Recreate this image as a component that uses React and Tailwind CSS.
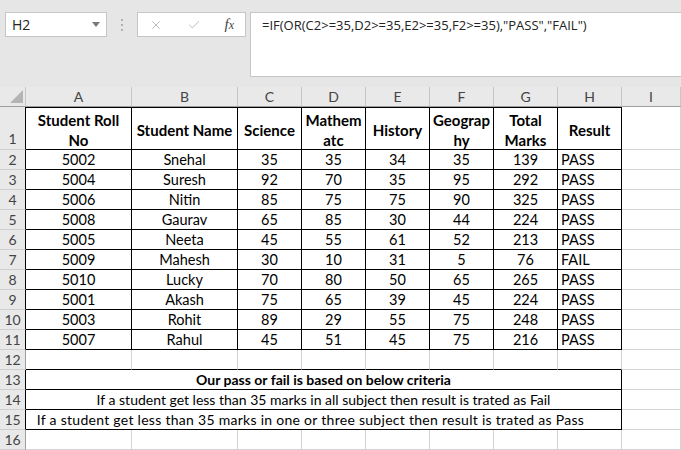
import { X, Check } from "lucide-react";

const students = [
  ["5002", "Snehal", 35, 35, 34, 35, 139, "PASS"],
  ["5004", "Suresh", 92, 70, 35, 95, 292, "PASS"],
  ["5006", "Nitin", 85, 75, 75, 90, 325, "PASS"],
  ["5008", "Gaurav", 65, 85, 30, 44, 224, "PASS"],
  ["5005", "Neeta", 45, 55, 61, 52, 213, "PASS"],
  ["5009", "Mahesh", 30, 10, 31, 5, 76, "FAIL"],
  ["5010", "Lucky", 70, 80, 50, 65, 265, "PASS"],
  ["5001", "Akash", 75, 65, 39, 45, 224, "PASS"],
  ["5003", "Rohit", 89, 29, 55, 75, 248, "PASS"],
  ["5007", "Rahul", 45, 51, 45, 75, 216, "PASS"],
];

const letters = ["A", "B", "C", "D", "E", "F", "G", "H", "I"];

const RowHead = ({ n, tall, dark }) => (
  <div
    className={`flex justify-center bg-[#e9e9e9] border-b border-b-[#cfcfcf] border-r text-[14px] text-[#444] ${
      tall ? "h-[43px] items-end leading-[20px]" : "h-[20px] items-center"
    } ${dark ? "border-r-black" : "border-r-[#9e9e9e]"}`}
  >
    {n}
  </div>
);

const Blank = ({ bottom }) => (
  <div
    className={`h-[20px] border-r border-b border-r-[#d4d4d4] ${
      bottom ? "border-b-black" : "border-b-[#d4d4d4]"
    }`}
  />
);

const Cell = ({ children, left }) => (
  <div
    className={`flex h-[20px] items-center border-r border-b border-black text-[14.5px] text-black ${
      left ? "justify-start pl-[3px]" : "justify-center"
    }`}
  >
    {children}
  </div>
);

const HeadCell = ({ children }) => (
  <div className="flex h-[43px] items-center justify-center border-t border-r border-b border-black pt-[2px] text-center text-[15px] font-bold leading-[20px] text-black">
    <span>{children}</span>
  </div>
);

const Merged = ({ children, bold, className = "" }) => (
  <div
    className={`col-span-8 flex h-[20px] items-center justify-center whitespace-nowrap border-r border-b border-black text-[14px] text-black ${
      bold ? "font-bold" : ""
    } ${className}`}
  >
    {children}
  </div>
);

const FormulaBar = () => (
  <div className="flex h-[77px] items-start pt-[12px] font-['Open_Sans',sans-serif]">
    {/* name box */}
    <div className="ml-[5px] flex h-[25px] w-[102px] items-center justify-between border border-[#c6c6c6] bg-white pl-[6px] pr-[6px] text-[14px] text-[#222]">
      <span>H2</span>
      <svg width="8" height="5" viewBox="0 0 8 5">
        <polygon points="0,0 8,0 4,5" fill="#7a7a7a" />
      </svg>
    </div>
    {/* grip dots */}
    <div className="flex w-[30px] flex-col items-center gap-[3px] pt-[7px]">
      <span className="h-[2px] w-[2px] bg-[#b0b0b0]" />
      <span className="h-[2px] w-[2px] bg-[#b0b0b0]" />
      <span className="h-[2px] w-[2px] bg-[#b0b0b0]" />
    </div>
    {/* cancel / enter / fx */}
    <div className="flex h-[25px] w-[109px] items-center justify-between border border-[#c6c6c6] bg-white pl-[11px] pr-[11px]">
      <X size={14} strokeWidth={1.5} color="#b4b4b4" />
      <Check size={14} strokeWidth={1.5} color="#b4b4b4" />
      <span className="font-['Liberation_Serif',serif] text-[15px] italic leading-none text-[#444]">
        f<span className="text-[12px]">x</span>
      </span>
    </div>
    {/* formula */}
    <div className="ml-[4px] h-[65px] flex-1 border border-r-0 border-[#c6c6c6] bg-white pl-[11px] pt-[2px] text-[13px] leading-[20px] text-[#222]">
      =IF(OR(C2&gt;=35,D2&gt;=35,E2&gt;=35,F2&gt;=35),"PASS","FAIL")
    </div>
  </div>
);

export default function App() {
  return (
    <div className="h-[450px] w-[681px] overflow-hidden bg-[#e6e6e6] font-['Lato',sans-serif]">
      <FormulaBar />
      <div className="h-[10px]" />
      <div className="grid grid-cols-[26px_106px_106px_64px_64px_64px_64px_64px_64px_59px] bg-white">
        {/* column headings */}
        <div className="relative h-[20px] border-r border-b border-r-[#c6c6c6] border-b-[#9e9e9e] bg-[#e9e9e9]">
          <svg className="absolute left-[10px] top-[3px]" width="13" height="13" viewBox="0 0 13 13">
            <polygon points="13,0 13,13 0,13" fill="#b4b4b4" />
          </svg>
        </div>
        {letters.map((l) => (
          <div
            key={l}
            className="flex h-[20px] items-center justify-center border-r border-b border-r-[#c6c6c6] border-b-[#9e9e9e] bg-[#e9e9e9] text-[14px] text-[#444]"
          >
            {l}
          </div>
        ))}

        {/* row 1 */}
        <RowHead n={1} tall dark />
        <HeadCell>
          Student Roll
          <br />
          No
        </HeadCell>
        <HeadCell>Student Name</HeadCell>
        <HeadCell>Science</HeadCell>
        <HeadCell>
          Mathem
          <br />
          atc
        </HeadCell>
        <HeadCell>History</HeadCell>
        <HeadCell>
          Geograp
          <br />
          hy
        </HeadCell>
        <HeadCell>
          Total
          <br />
          Marks
        </HeadCell>
        <HeadCell>Result</HeadCell>
        <div className="h-[43px] border-r border-b border-[#d4d4d4]" />

        {/* rows 2-11 */}
        {students.map((s, i) => (
          <div key={s[0]} className="contents">
            <RowHead n={i + 2} dark />
            {s.slice(0, 7).map((v, j) => (
              <Cell key={j}>{v}</Cell>
            ))}
            <Cell left>{s[7]}</Cell>
            <Blank />
          </div>
        ))}

        {/* row 12 */}
        <RowHead n={12} />
        {[0, 1, 2, 3, 4, 5, 6, 7].map((k) => (
          <Blank key={k} bottom />
        ))}
        <Blank />

        {/* criteria */}
        <RowHead n={13} dark />
        <Merged bold>Our pass or fail is based on below criteria</Merged>
        <Blank />
        <RowHead n={14} dark />
        <Merged>If a student get less than 35 marks in all subject then result is trated as Fail</Merged>
        <Blank />
        <RowHead n={15} dark />
        <Merged className="pr-[26px] tracking-[0.28px]">
          If a student get less than 35 marks in one or three subject then result is trated as Pass
        </Merged>
        <Blank />

        {/* row 16 */}
        <RowHead n={16} />
        {letters.map((l) => (
          <Blank key={l} />
        ))}
      </div>
    </div>
  );
}
